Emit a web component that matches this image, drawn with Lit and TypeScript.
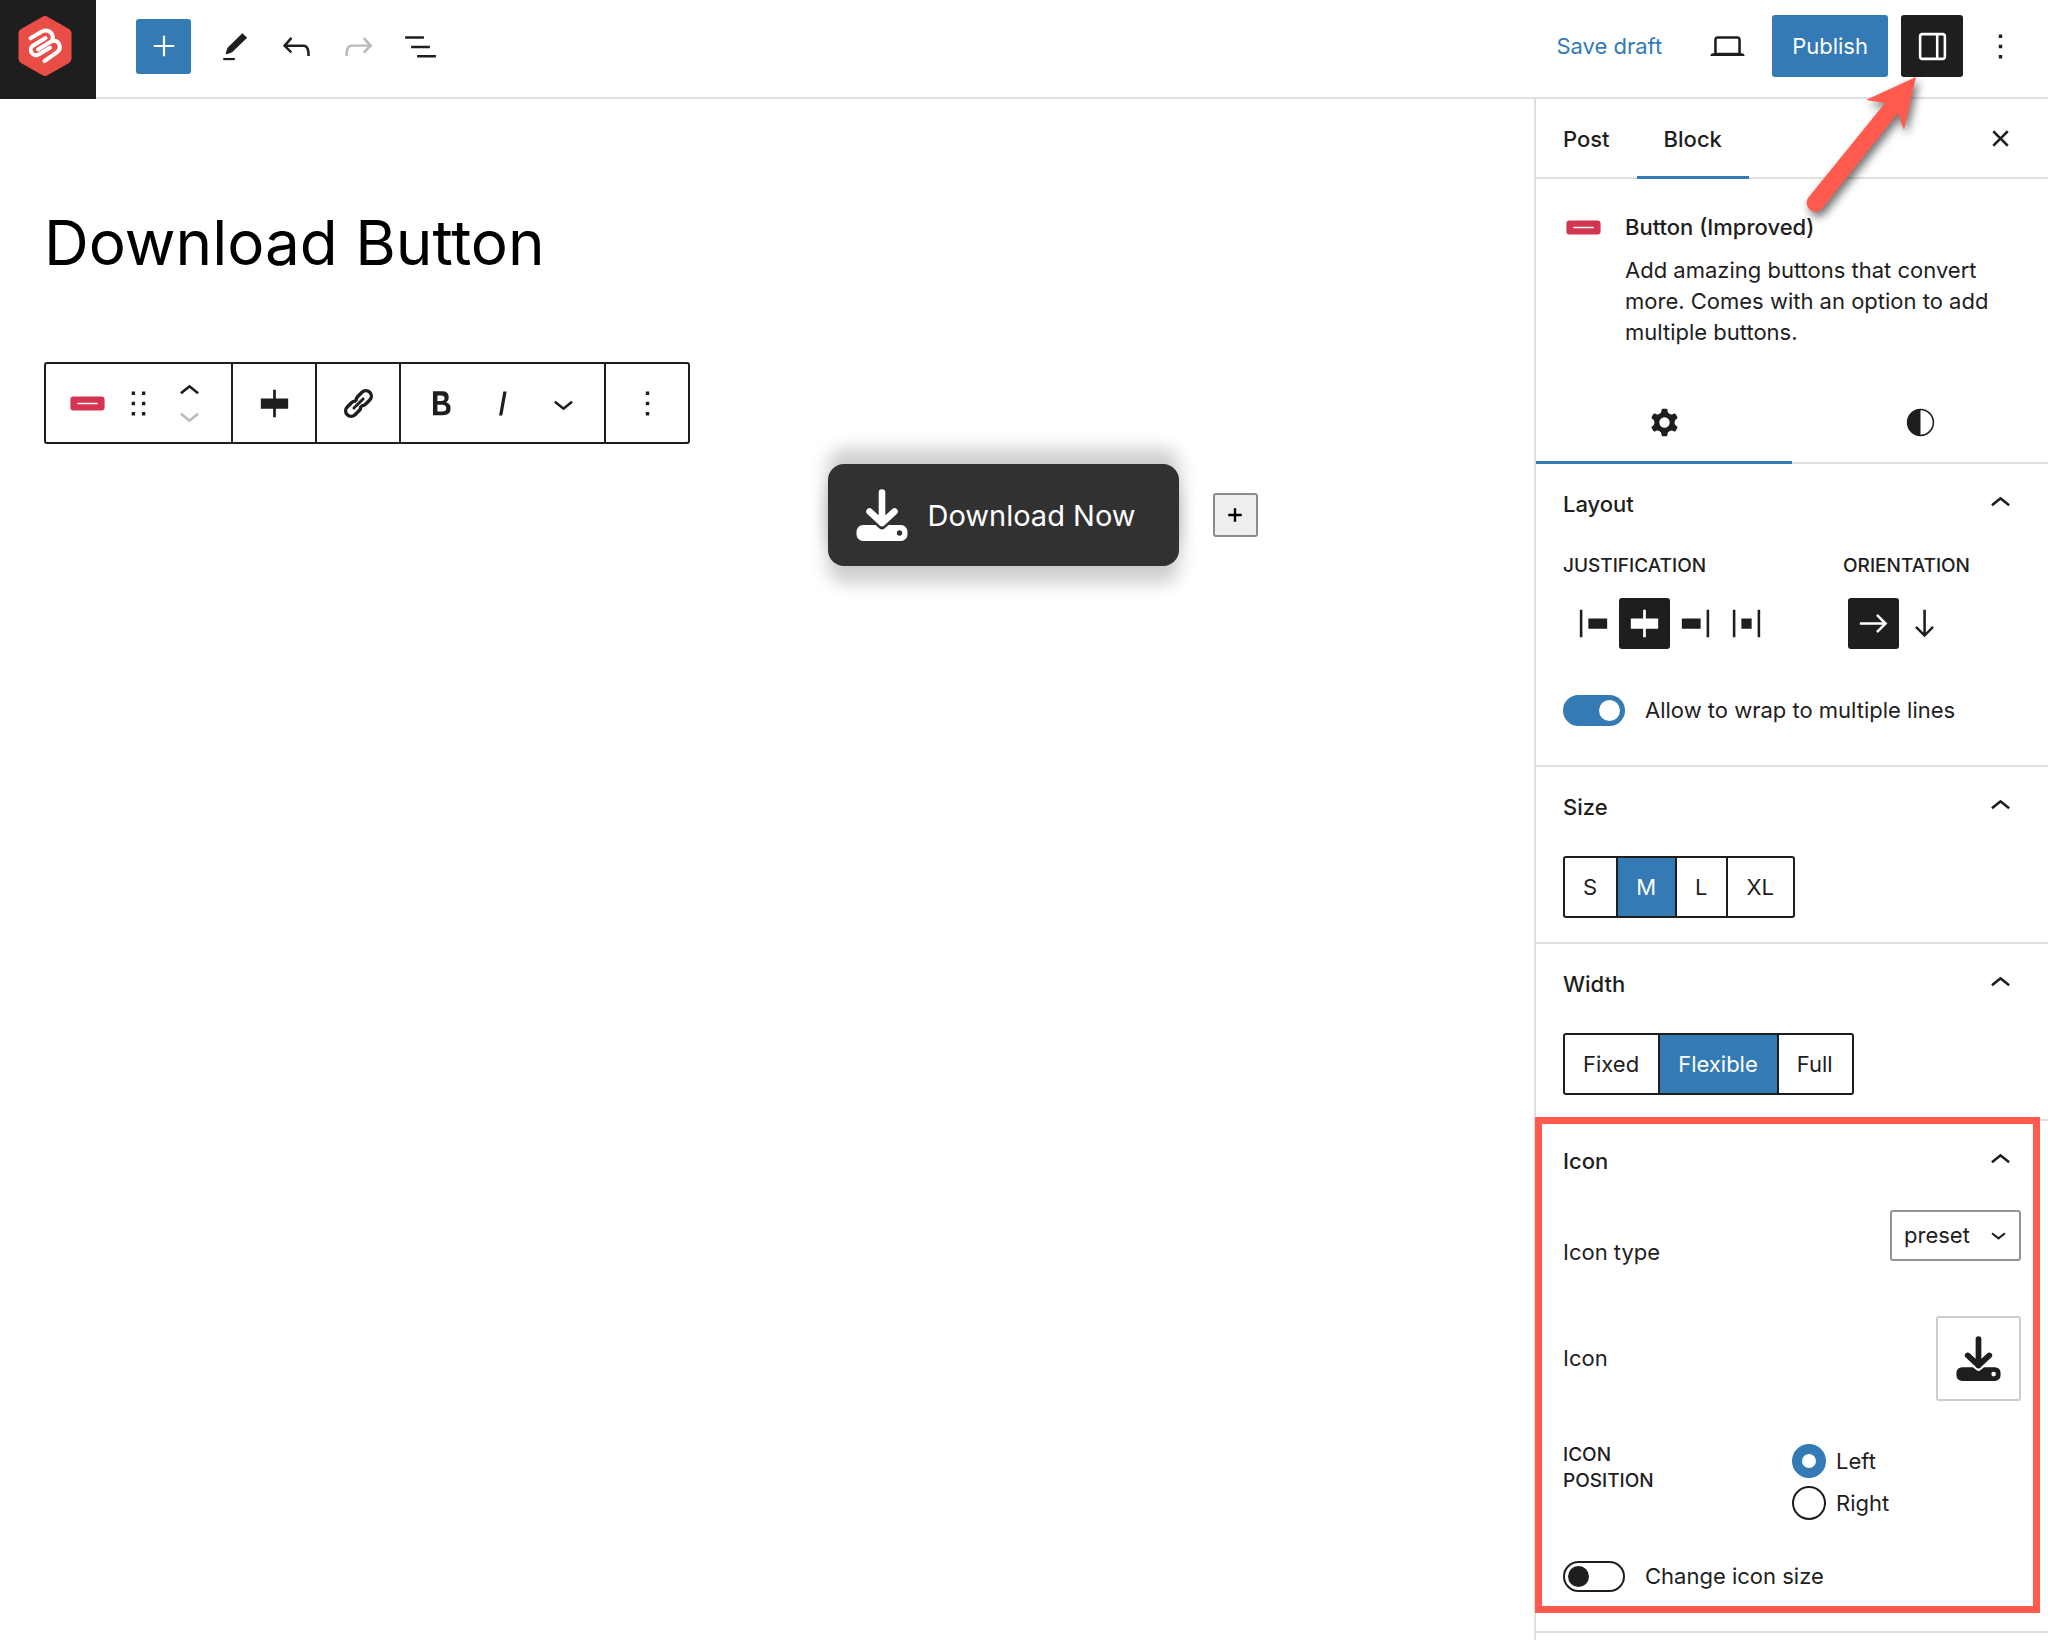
import { LitElement, html, css, svg } from "lit";
import { customElement, state } from "lit/decorators.js";

const icon = (body: unknown, cls = "") =>
  html`<svg class="icon ${cls}" viewBox="0 0 24 24" aria-hidden="true">${body}</svg>`;

const plus = svg`<path d="M12 3.2v17.6M3.2 12h17.6" fill="none" stroke="currentColor" stroke-width="1.9"/>`;
const plusBold = svg`<path d="M12 3v18M3 12h18" fill="none" stroke="currentColor" stroke-width="3.2"/>`;
const pencil = svg`<path d="m16.600 4.200 2.800 2.700-8.500 8.200c-.6.5-2.300 1.100-3.600 1.400-.3 0-.5-.2-.4-.5.3-1.200.8-2.900 1.300-3.600z"/><path d="M5.400 18.700h6.800V20H5.400z"/>`;
const undo = svg`<path d="M18.3 11.700c-.6-.6-1.400-.9-2.300-.9H6.700l2.900-3.300-1.100-1-4.500 5L8.500 16l1-1-2.700-2.700H16c.5 0 .9.2 1.300.5 1 1 1 3.400 1 4.500v.3h1.500v-.2c0-1.500 0-4.300-1.500-5.700z"/>`;
const redo = svg`<path d="M15.600 6.500l-1.100 1 2.900 3.300H8c-.9 0-1.700.3-2.300.9-1.400 1.500-1.400 4.200-1.400 5.600v.2h1.500v-.3c0-1.100 0-3.500 1-4.500.3-.3.7-.5 1.300-.5h9.200L14.500 15l1.100 1.100 4.600-4.600-4.600-5z"/>`;
const listView = svg`<path d="M3 6h11v1.500H3V6Zm3.500 5.500h11V13h-11v-1.500ZM21 17H10v1.500h11V17Z"/>`;
const laptop = svg`<path d="M20.500 16h-.7V8c0-1.100-.9-2-2-2H6.200c-1.100 0-2 .9-2 2v8h-.7c-.8 0-1.500.7-1.500 1.500h20c0-.8-.7-1.500-1.500-1.500zM5.700 8c0-.3.2-.5.5-.5h11.600c.3 0 .5.2.5.5v7.600H5.700V8z"/>`;
const drawer = svg`<path fill-rule="evenodd" clip-rule="evenodd" d="M18 4H6c-1.100 0-2 .9-2 2v12c0 1.100.9 2 2 2h12c1.100 0 2-.9 2-2V6c0-1.100-.9-2-2-2zm-4 14.500H6c-.3 0-.5-.2-.5-.5V6c0-.3.2-.5.5-.5h8v13zm4.500-.5c0 .3-.2.5-.5.5h-2.500v-13H18c.3 0 .5.2.5.5v12z"/>`;
const more = svg`<path d="M13 19h-2v-2h2v2zm0-6h-2v-2h2v2zm0-6h-2V5h2v2z"/>`;
const close = svg`<path d="M12 13.060l3.712 3.713 1.061-1.060L13.061 12l3.712-3.712-1.060-1.060L12 10.938 8.288 7.227l-1.061 1.060L10.939 12l-3.712 3.712 1.060 1.061L12 13.061z"/>`;
const chevUp = svg`<path d="M6.500 12.400 12 8l5.500 4.400-.9 1.200L12 10l-4.500 3.600-1-1.200z"/>`;
const chevDown = svg`<path d="M17.500 11.600 12 16l-5.500-4.400.9-1.200L12 14l4.500-3.600 1 1.200z"/>`;
const drag = svg`<path d="M8 7h2V5H8v2zm0 6h2v-2H8v2zm0 6h2v-2H8v2zm6-14v2h2V5h-2zm0 8h2v-2h-2v2zm0 6h2v-2h-2v2z"/>`;
const justifyLeft = svg`<path d="M9 9v6h11V9H9zM4 20h1.500V4H4v16z"/>`;
const justifyCenter = svg`<path d="M20 9h-7.200V4h-1.600v5H4v6h7.200v5h1.600v-5H20z"/>`;
const justifyRight = svg`<path d="M4 15h11V9H4v6zM18.500 4v16H20V4h-1.500z"/>`;
const spaceBetween = svg`<path d="M9 15h6V9H9v6zm-5 5h1.500V4H4v16zM18.500 4v16H20V4h-1.500z"/>`;
const arrowRight = svg`<path d="m14.500 6.500-1 1 3.700 3.700H4v1.600h13.200l-3.700 3.700 1 1 5.600-5.500z"/>`;
const arrowDown = svg`<path d="m16.500 13.500-3.700 3.700V4h-1.500v13.200l-3.800-3.700-1 1 5.500 5.600 5.500-5.600z"/>`;
const link = svg`<g transform="rotate(-45 12 12)" fill="none" stroke="currentColor" stroke-width="2">
  <rect x="2.700" y="8.800" width="9.900" height="6.400" rx="3.200"/>
  <rect x="11.400" y="8.800" width="9.900" height="6.400" rx="3.200"/>
  <path d="M8.300 12h7.400" stroke="#fff" stroke-width="3"/>
  <path d="M8.200 12h7.600" stroke-width="1.700" stroke-linecap="round"/>
</g>`;
const bold = svg`<path d="M14.700 11.300c1-.6 1.500-1.600 1.500-3 0-2.300-1.300-3.400-4-3.400H7v14h5.800c1.400 0 2.500-.3 3.300-1 .8-.7 1.200-1.700 1.200-2.900.1-1.900-.8-3.100-2.600-3.700zm-5.100-4h2.300c.6 0 1.100.1 1.400.4.3.3.5.7.5 1.200s-.2 1-.5 1.200c-.3.3-.8.4-1.400.4H9.600V7.300zm4.600 9c-.4.3-1 .4-1.700.4H9.600v-3.900h2.900c.7 0 1.300.2 1.700.5.4.3.6.8.6 1.500s-.2 1.200-.6 1.500z"/>`;
const italic = svg`<path d="M12.500 5 10 19h1.900l2.500-14z"/>`;
const gear = svg`<circle cx="12" cy="12" r="4.500" fill="none" stroke="currentColor" stroke-width="2.900"/>
  ${[0, 60, 120, 180, 240, 300].map((a) => svg`<path transform="rotate(${a} 12 12)" d="M9.300 7.200 10.100 5.800 10.300 4.500q.1-.6.700-.6h2q.6 0 .7.600l.2 1.300.8 1.400z"/>`)}`;
const contrast = svg`<path fill-rule="evenodd" d="M12 4a8 8 0 1 0 0 16 8 8 0 0 0 0-16zm0 .9a7.100 7.100 0 0 1 0 14.200V4.900z"/>`;
const blockBadge = svg`<rect x="2" y="7.900" width="20" height="8.200" rx="1.700" fill="#d3344f"/><path d="M6.500 12h11" stroke="#fff" stroke-width="1" stroke-linecap="round"/>`;

const download = html`<svg class="download" viewBox="0 0 52 52" aria-hidden="true">
  <path d="M7 36h12.500l4 3.400a4 4 0 0 0 5 0l4-3.400H45a6.500 6.500 0 0 1 6.500 6.500v3A6.500 6.500 0 0 1 45 52H7a6.500 6.500 0 0 1-6.500-6.500v-3A6.500 6.500 0 0 1 7 36zM43.500 41.300a2.700 2.700 0 1 0 0 5.400 2.700 2.700 0 0 0 0-5.400z" fill-rule="evenodd"/>
  <path d="M26 3.600V34M13.500 22.500 26 34l12.500-11.500" fill="none" stroke="currentColor" stroke-width="6.600" stroke-linecap="round" stroke-linejoin="round"/>
</svg>`;

@customElement("app-root")
export class AppRoot extends LitElement {
  @state() private size = "M";
  @state() private width = "Flexible";

  static styles = css`
    :host { display: block; font-family: Inter, "Liberation Sans", sans-serif; font-size: 22px; line-height: 31px; color: #1e1e1e; background: #fff; }
    * { box-sizing: border-box; }
    button, select, input { font: inherit; color: inherit; margin: 0; padding: 0; border: 0; background: none; }
    button { display: inline-flex; align-items: center; justify-content: center; }
    h1, h2, h3, p, fieldset, legend { margin: 0; padding: 0; border: 0; font: inherit; }
    .page { display: grid; grid-template-columns: minmax(0, 1fr) 514px; grid-template-rows: 99px auto; min-height: 100vh; overflow: hidden; }
    .icon { width: 41px; height: 41px; fill: currentColor; display: block; flex: none; }

    .top { grid-column: 1 / -1; display: flex; align-items: stretch; justify-content: space-between; border-bottom: 2px solid #e0e0e0; }
    .tools, .actions { display: flex; align-items: center; }
    .actions { padding: 0 20px 5px 0; }
    .logo { width: 96px; height: 99px; padding: 0 7px 7px 0; background: #1e1e1e; display: flex; align-items: center; justify-content: center; align-self: flex-start; }
    .logo svg { width: 54px; height: 60px; }
    .toolrow { display: flex; align-items: center; gap: 7px; margin-left: 40px; padding-bottom: 5px; }
    .tool { width: 55px; height: 55px; }
    .insert { background: #347ab5; color: #fff; border-radius: 3px; margin-right: 9px; }
    .insert .icon { width: 28px; height: 28px; }
    .faded { color: #bbb; }
    .save { color: #347ab5; text-decoration: none; margin-right: 45px; }
    .publish { height: 62px; padding: 0 20px; background: #347ab5; color: #fff; border-radius: 3px; margin: 0 13px 0 24px; }
    .toggle-side { width: 62px; height: 62px; background: #1e1e1e; color: #fff; border-radius: 3px; margin-right: 10px; }

    .canvas { padding: 106px 44px 0; }
    .title { font-size: 62px; line-height: 76px; color: #000; }
    .toolbar { display: inline-flex; height: 82px; margin-top: 81px; border: 2px solid #1e1e1e; border-radius: 3px; vertical-align: top; }
    .group { display: flex; align-items: center; justify-content: center; border-right: 2px solid #1e1e1e; min-width: 84px; }
    .group:last-child { border-right: 0; min-width: 82px; }
    .group.first { padding: 0 21px; gap: 10px; }
    .group.text { padding: 0 20px; gap: 20px; }
    .movers { display: flex; flex-direction: column; }
    .movers button { height: 24px; overflow: hidden; }
    .buttons { display: flex; align-items: center; justify-content: center; gap: 34px; padding-left: 551px; margin-top: 20px; }
    .cta { height: 102px; padding: 0 43px 0 28px; gap: 20px; border-radius: 16px; background: #313131; color: #fff; font-size: 29px; white-space: nowrap; box-shadow: 0 17px 18px 0 rgba(0, 0, 0, .2), 0 -15px 18px 0 rgba(0, 0, 0, .2); }
    .download { width: 52px; height: 52px; fill: currentColor; display: block; }
    .append { width: 45px; height: 44px; border: 2px solid #8c8c8c; border-radius: 3px; background: #eee; color: #000; }
    .append .icon { width: 18px; height: 18px; }

    .side { border-left: 2px solid #e0e0e0; }
    .tabs { display: flex; height: 80px; border-bottom: 2px solid #e0e0e0; }
    .tabs button { padding: 3px 27px 0; font-weight: 500; height: 80px; border-bottom: 3px solid transparent; }
    .tabs .on { border-color: #347ab5; }
    .tabs .shut { margin-left: auto; padding: 2px 27px 0 0; }
    .card { display: grid; grid-template-columns: 41px 1fr; gap: 21px; padding: 33px 48px 0 27px; height: 204px; }
    .card h2 { font-weight: 500; margin-bottom: 12px; }
    .card .icon { margin-top: -5px; }
    .modes { display: grid; grid-template-columns: 1fr 1fr; height: 81px; }
    .modes button { border-bottom: 2px solid #e0e0e0; }
    .modes .on { border-bottom: 3px solid #347ab5; }

    .section { padding: 0 27px; border-bottom: 2px solid #e0e0e0; }
    .head { width: 100%; height: 81px; justify-content: space-between; font-weight: 500; }
    .head .icon { margin-bottom: 3px; }
    .caps { font-size: 19px; line-height: 26px; font-weight: 500; text-transform: uppercase; }
    .pair { display: flex; padding-top: 8px; }
    .pair > :first-child { width: 280px; }
    .set { display: flex; padding: 19px 0 0 5px; }
    .set button { width: 51px; height: 51px; border-radius: 3px; }
    .set .on { background: #1e1e1e; color: #fff; }
    .switch { display: flex; align-items: center; gap: 20px; }
    .switch input { appearance: none; width: 62px; height: 31px; border: 2px solid #1e1e1e; border-radius: 16px; display: flex; align-items: center; padding: 0 3px; }
    .switch input::before { content: ""; width: 21px; height: 21px; border-radius: 50%; background: #1e1e1e; }
    .switch input:checked { background: #347ab5; border-color: #347ab5; justify-content: flex-end; }
    .switch input:checked::before { background: #fff; }
    .wrap { margin: 46px 0 39px; }
    .segment { display: inline-flex; height: 62px; margin: 8px 0 24px; border: 2px solid #1e1e1e; border-radius: 3px; vertical-align: top; }
    .segment button { padding: 0 19px 0 18px; border-right: 2px solid #1e1e1e; }
    .segment button:last-child { border-right: 0; }
    .segment .on { background: #347ab5; color: #fff; }

    .iconset { position: relative; }
    .frame { position: absolute; inset: -4px 8px 18px -1px; border: 7px solid #ff5a4d; pointer-events: none; }
    .row { display: flex; justify-content: space-between; align-items: center; }
    .type { align-items: flex-start; height: 114px; }
    .type label { padding-top: 35px; }
    .dd { display: flex; position: relative; margin-top: 8px; }
    .dd select { appearance: none; width: 131px; height: 51px; padding-left: 12px; border: 2px solid #949494; border-radius: 3px; background: #fff; }
    .dd .icon { position: absolute; right: 7px; top: 9px; width: 31px; height: 31px; pointer-events: none; }
    .pick { width: 85px; height: 85px; border: 2px solid #ccc; border-radius: 3px; }
    .pick .download { width: 45px; height: 45px; }
    .position { display: grid; grid-template-columns: 120px 1fr; column-gap: 109px; padding-top: 41px; }
    .choices { display: grid; gap: 8px; padding-top: 2px; }
    .choices label { display: flex; align-items: center; gap: 10px; height: 34px; }
    .choices input { appearance: none; width: 34px; height: 34px; border: 2px solid #1e1e1e; border-radius: 50%; }
    .choices input:checked { border: 10px solid #347ab5; }
    .resize { margin: 41px 0 39px; }

    .pointer { position: absolute; right: 120px; top: 70px; width: 140px; height: 155px; pointer-events: none; overflow: visible; filter: drop-shadow(3px 5px 4px rgba(0, 0, 0, .55)); }
  `;

  private segment(name: string, items: string[], value: string, pick: (v: string) => void) {
    return html`<div class="segment" role="group" aria-label=${name}>
      ${items.map((i) => html`<button class=${i === value ? "on" : ""} aria-pressed=${i === value} @click=${() => pick(i)}>${i}</button>`)}
    </div>`;
  }

  private head(title: string) {
    return html`<h3><button class="head" aria-expanded="true">${title}${icon(chevUp)}</button></h3>`;
  }

  render() {
    return html`<div class="page">
      <header class="top">
        <div class="tools">
          <a class="logo" href="#" aria-label="Dashboard"><svg viewBox="0 0 54 60" aria-hidden="true">
            <path d="M24.500.7a5 5 0 0 1 5 0L51 13a5 5 0 0 1 2.500 4.300v25.400A5 5 0 0 1 51 47L29.500 59.300a5 5 0 0 1-5 0L3 47a5 5 0 0 1-2.500-4.300V17.300A5 5 0 0 1 3 13z" fill="#e84e46"/>
            <path d="M12.500 22.300 24 15.500c7-3.500 13 3 9.800 9.400 8.700-1.300 10.200 8.300 4.700 11.800L26.500 45M27.500 22 14.500 30c-4.500 4 .5 11.500 6 8.500L32 31.800M34 25l-14 8.500" fill="none" stroke="#fff" stroke-width="4" stroke-linecap="round" stroke-linejoin="round"/>
          </svg></a>
          <div class="toolrow">
            <button class="tool insert" aria-label="Add block">${icon(plus)}</button>
            <button class="tool" aria-label="Edit">${icon(pencil)}</button>
            <button class="tool" aria-label="Undo">${icon(undo)}</button>
            <button class="tool faded" aria-label="Redo">${icon(redo)}</button>
            <button class="tool" aria-label="Document overview">${icon(listView)}</button>
          </div>
        </div>
        <div class="actions">
          <a class="save" href="#">Save draft</a>
          <button aria-label="Preview">${icon(laptop)}</button>
          <button class="publish">Publish</button>
          <button class="toggle-side" aria-label="Settings">${icon(drawer)}</button>
          <button class="tool" aria-label="Options">${icon(more)}</button>
        </div>
      </header>

      <main class="canvas">
        <h1 class="title">Download Button</h1>
        <div class="toolbar" role="toolbar" aria-label="Block tools">
          <div class="group first">
            <button aria-label="Button block">${icon(blockBadge)}</button>
            <button aria-label="Drag">${icon(drag)}</button>
            <span class="movers">
              <button aria-label="Move up">${icon(chevUp)}</button>
              <button class="faded" aria-label="Move down">${icon(chevDown)}</button>
            </span>
          </div>
          <div class="group"><button aria-label="Justify">${icon(justifyCenter)}</button></div>
          <div class="group"><button aria-label="Link">${icon(link)}</button></div>
          <div class="group text">
            <button aria-label="Bold">${icon(bold)}</button>
            <button aria-label="Italic">${icon(italic)}</button>
            <button aria-label="More formatting">${icon(chevDown)}</button>
          </div>
          <div class="group"><button aria-label="Options">${icon(more)}</button></div>
        </div>
        <div class="buttons">
          <button class="cta">${download}<span>Download Now</span></button>
          <button class="append" aria-label="Add button">${icon(plusBold)}</button>
        </div>
      </main>

      <aside class="side">
        <div class="tabs">
          <button>Post</button><button class="on">Block</button>
          <button class="shut" aria-label="Close">${icon(close)}</button>
        </div>
        <div class="card">
          ${icon(blockBadge)}
          <div><h2>Button (Improved)</h2>
          <p>Add amazing buttons that convert more. Comes with an option to add multiple buttons.</p></div>
        </div>
        <div class="modes">
          <button class="on" aria-label="Settings">${icon(gear)}</button>
          <button aria-label="Styles">${icon(contrast)}</button>
        </div>

        <section class="section">
          ${this.head("Layout")}
          <div class="pair">
            <fieldset><legend class="caps">Justification</legend>
              <div class="set">
                <button aria-label="Left">${icon(justifyLeft)}</button>
                <button class="on" aria-label="Center">${icon(justifyCenter)}</button>
                <button aria-label="Right">${icon(justifyRight)}</button>
                <button aria-label="Space between">${icon(spaceBetween)}</button>
              </div>
            </fieldset>
            <fieldset><legend class="caps">Orientation</legend>
              <div class="set">
                <button class="on" aria-label="Horizontal">${icon(arrowRight)}</button>
                <button aria-label="Vertical">${icon(arrowDown)}</button>
              </div>
            </fieldset>
          </div>
          <label class="switch wrap"><input type="checkbox" role="switch" checked />Allow to wrap to multiple lines</label>
        </section>

        <section class="section">
          ${this.head("Size")}
          ${this.segment("Size", ["S", "M", "L", "XL"], this.size, (v) => (this.size = v))}
        </section>

        <section class="section">
          ${this.head("Width")}
          ${this.segment("Width", ["Fixed", "Flexible", "Full"], this.width, (v) => (this.width = v))}
        </section>

        <section class="section iconset">
          ${this.head("Icon")}
          <div class="row type">
            <label for="type">Icon type</label>
            <span class="dd"><select id="type"><option>preset</option></select>${icon(chevDown)}</span>
          </div>
          <div class="row"><span>Icon</span><button class="pick" aria-label="Choose icon">${download}</button></div>
          <div class="position" role="radiogroup" aria-labelledby="pos">
            <span class="caps" id="pos">Icon position</span>
            <div class="choices">
              <label><input type="radio" name="pos" checked />Left</label>
              <label><input type="radio" name="pos" />Right</label>
            </div>
          </div>
          <label class="switch resize"><input type="checkbox" role="switch" />Change icon size</label>
          <div class="frame"></div>
        </section>
      </aside>
    </div>
    <svg class="pointer" viewBox="0 0 140 155" aria-hidden="true">
      <path d="M128 7 78 30l19 3L20 128a9 9 0 0 0 13 12L110 43l6 17z" fill="#ff5a4d"/>
    </svg>`;
  }
}
